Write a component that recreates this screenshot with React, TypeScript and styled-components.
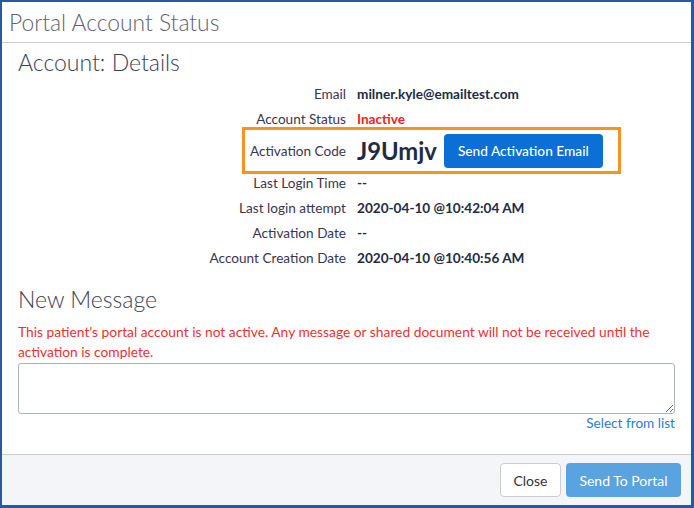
import React from "react";
import styled, { createGlobalStyle } from "styled-components";

const GlobalStyle = createGlobalStyle`
    html, body {
        margin: 0;
        padding: 0;
        background: #ffffff;
    }
    body {
        font-family: Lato, "Open Sans", Arial, sans-serif;
        color: #2b2d45;
    }
    * {
        box-sizing: border-box;
    }
`;

type Detail = {
    label: string;
    value: string;
    status?: boolean;
};

const topDetails: Detail[] = [
    { label: "Email", value: "milner.kyle@emailtest.com" },
    { label: "Account Status", value: "Inactive", status: true },
];

const bottomDetails: Detail[] = [
    { label: "Last Login Time", value: "--" },
    { label: "Last login attempt", value: "2020-04-10 @10:42:04 AM" },
    { label: "Activation Date", value: "--" },
    { label: "Account Creation Date", value: "2020-04-10 @10:40:56 AM" },
];

const App = () => {
    return (
        <>
            <GlobalStyle />
            <Modal>
                <Header>
                    <ModalTitle>Portal Account Status</ModalTitle>
                </Header>
                <Body>
                    <SectionTitle>Account: Details</SectionTitle>
                    <DetailList>
                        {topDetails.map(d => (
                            <DetailRow key={d.label}>
                                <Label>{d.label}</Label>
                                <Value $status={d.status}>{d.value}</Value>
                            </DetailRow>
                        ))}
                        <CodeRow>
                            <Label>Activation Code</Label>
                            <Code>J9Umjv</Code>
                            <PrimaryButton>Send Activation Email</PrimaryButton>
                        </CodeRow>
                        {bottomDetails.map(d => (
                            <DetailRow key={d.label}>
                                <Label>{d.label}</Label>
                                <Value>{d.value}</Value>
                            </DetailRow>
                        ))}
                    </DetailList>
                    <MessageTitle>New Message</MessageTitle>
                    <Warning>
                        This patient's portal account is not active. Any message or shared document will not be received until the activation is complete.
                    </Warning>
                    <MessageBox />
                    <ListLink href="#">Select from list</ListLink>
                </Body>
                <Footer>
                    <CloseButton>Close</CloseButton>
                    <SendButton>Send To Portal</SendButton>
                </Footer>
            </Modal>
        </>
    );
};

const Modal = styled.div`
    width: 694px;
    height: 508px;
    border: 2px solid #2757a6;
    border-right-width: 3px;
    border-bottom-width: 3px;
    display: flex;
    flex-direction: column;
    background: #ffffff;
`;

const Header = styled.div`
    height: 41px;
    padding: 0 7px;
    display: flex;
    align-items: center;
    border-bottom: 1px solid #cccccc;
`;

const ModalTitle = styled.h1`
    margin: 0;
    font-size: 22.8px;
    font-weight: 300;
    color: #5f6170;
`;

const Body = styled.div`
    flex: 1;
    padding: 5px 16px 0 16px;
    display: flex;
    flex-direction: column;
`;

const SectionTitle = styled.h2`
    margin: 0;
    height: 28px;
    line-height: 28px;
    font-size: 23px;
    font-weight: 300;
    color: #3b3e58;
`;

const DetailList = styled.div`
    display: flex;
    flex-direction: column;
    margin-top: 5px;
`;

const DetailRow = styled.div`
    display: flex;
    align-items: center;
    height: 25px;
`;

const CodeRow = styled(DetailRow)`
    position: relative;
    height: 39px;

    &::after {
        content: "";
        position: absolute;
        left: 224px;
        width: 373px;
        top: -4px;
        bottom: -4px;
        border: 3px solid #f7931e;
        pointer-events: none;
    }
`;

const Label = styled.span`
    width: 339px;
    padding-right: 11px;
    text-align: right;
    font-size: 13.6px;
    color: #3a3550;
`;

const Value = styled.span<{ $status?: boolean }>`
    font-size: 13.6px;
    font-weight: 700;
    color: ${p => (p.$status ? "#f0231e" : "#222a45")};
`;

const Code = styled.span`
    font-size: 23.8px;
    font-weight: 700;
    color: #1f2a44;
    margin-right: 7px;
`;

const PrimaryButton = styled.button`
    height: 34px;
    width: 159px;
    padding: 0;
    border: none;
    border-radius: 4px;
    background: #0b6fd5;
    color: #ffffff;
    font-family: inherit;
    font-size: 13.7px;
    font-weight: 500;
    cursor: pointer;
`;

const MessageTitle = styled(SectionTitle)`
    margin-top: 15px;
`;

const Warning = styled.p`
    margin: 9px 0 0 0;
    font-size: 13.8px;
    line-height: 20px;
    color: #f0302b;
`;

const MessageBox = styled.textarea`
    margin-top: 1px;
    width: 100%;
    height: 51px;
    border: 1px solid #a9b4c6;
    border-radius: 3px;
    resize: vertical;
    font-family: inherit;
`;

const ListLink = styled.a`
    align-self: flex-end;
    margin-top: 1px;
    font-size: 13.6px;
    color: #2f7ad8;
    text-decoration: none;
`;

const Footer = styled.div`
    height: 51px;
    border-top: 1px solid #cccccc;
    background: #f4f5f8;
    display: flex;
    align-items: center;
    justify-content: flex-end;
    gap: 5px;
    padding: 0 10px 0 0;
`;

const CloseButton = styled.button`
    height: 34px;
    width: 61px;
    border: 1px solid #cccccc;
    border-radius: 4px;
    background: #ffffff;
    color: #333333;
    font-family: inherit;
    font-size: 14px;
`;

const SendButton = styled.button`
    height: 34px;
    width: 115px;
    border: none;
    border-radius: 4px;
    background: #5aa3e1;
    color: #ffffff;
    font-family: inherit;
    font-size: 14px;
`;

export default App;
